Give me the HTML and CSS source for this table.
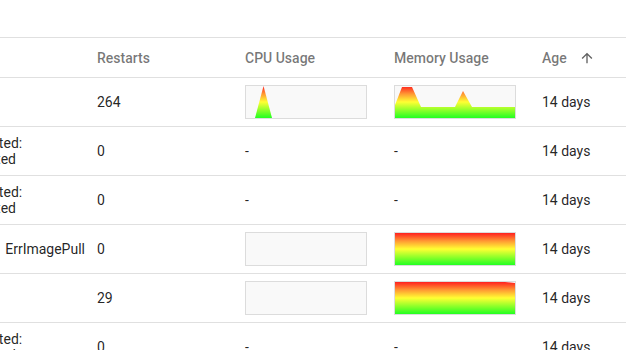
FILE: index.html
```html
<!DOCTYPE html>
<html>
<head>
<meta charset="utf-8">
<link rel="stylesheet" href="styles.css">
</head>
<body>
<svg class="defs" width="0" height="0">
  <defs>
    <linearGradient id="heat" x1="0" y1="0" x2="0" y2="32" gradientUnits="userSpaceOnUse">
      <stop offset="0" stop-color="#ff2020"/>
      <stop offset="0.25" stop-color="#ff9933"/>
      <stop offset="0.5" stop-color="#ffff33"/>
      <stop offset="1" stop-color="#22ff22"/>
    </linearGradient>
  </defs>
</svg>
<div class="viewport">
  <div class="table">
    <div class="row head">
      <div class="cell"></div>
      <div class="cell">Restarts</div>
      <div class="cell">CPU Usage</div>
      <div class="cell">Memory Usage</div>
      <div class="cell age">Age
        <svg class="sort" viewBox="0 0 24 24" width="16" height="16"><path d="M4 12l1.41 1.41L11 7.83V20h2V7.83l5.58 5.59L20 12l-8-8-8 8z"/></svg>
      </div>
    </div>
    <div class="row">
      <div class="cell"></div>
      <div class="cell">264</div>
      <div class="cell"><svg class="chart" viewBox="0 0 120 32" preserveAspectRatio="none"><polygon fill="url(#heat)" points="9,32 17.5,0 26,32"/></svg></div>
      <div class="cell"><svg class="chart" viewBox="0 0 120 32" preserveAspectRatio="none"><polygon fill="url(#heat)" points="0,32 0,19 7,1 17,1 26,21 60,21 68,5 77,21 120,21 120,32"/></svg></div>
      <div class="cell">14 days</div>
    </div>
    <div class="row">
      <div class="cell status">Terminated:<br>Completed</div>
      <div class="cell">0</div>
      <div class="cell">-</div>
      <div class="cell">-</div>
      <div class="cell">14 days</div>
    </div>
    <div class="row">
      <div class="cell status">Terminated:<br>Completed</div>
      <div class="cell">0</div>
      <div class="cell">-</div>
      <div class="cell">-</div>
      <div class="cell">14 days</div>
    </div>
    <div class="row">
      <div class="cell status">Waiting:<span class="reason">ErrImagePull</span></div>
      <div class="cell">0</div>
      <div class="cell"><svg class="chart" viewBox="0 0 120 32" preserveAspectRatio="none"></svg></div>
      <div class="cell"><svg class="chart" viewBox="0 0 120 32" preserveAspectRatio="none"><rect fill="url(#heat)" x="0" y="0" width="120" height="32"/></svg></div>
      <div class="cell">14 days</div>
    </div>
    <div class="row">
      <div class="cell"></div>
      <div class="cell">29</div>
      <div class="cell"><svg class="chart" viewBox="0 0 120 32" preserveAspectRatio="none"></svg></div>
      <div class="cell"><svg class="chart" viewBox="0 0 120 32" preserveAspectRatio="none"><polygon fill="url(#heat)" points="0,0 110,0 120,1 120,32 0,32"/></svg></div>
      <div class="cell">14 days</div>
    </div>
    <div class="row">
      <div class="cell status">Terminated:<br>Completed</div>
      <div class="cell">0</div>
      <div class="cell">-</div>
      <div class="cell">-</div>
      <div class="cell">14 days</div>
    </div>
  </div>
</div>
</body>
</html>
```

FILE: styles.css
```css
html, body {
  margin: 0;
  padding: 0;
  background: #fff;
}
body {
  font-family: Roboto, "Liberation Sans", sans-serif;
  font-size: 14px;
  color: rgba(0, 0, 0, 0.87);
}
.defs {
  position: absolute;
  width: 0;
  height: 0;
}
.viewport {
  width: 626px;
  height: 350px;
  overflow: hidden;
  padding-top: 37px;
  box-sizing: border-box;
}
.table {
  margin-left: -52px;
  width: 678px;
  border-top: 1px solid #e0e0e0;
}
.row {
  display: grid;
  grid-template-columns: 149px 148px 149px 148px 1fr;
  height: 48px;
  border-bottom: 1px solid #e0e0e0;
  align-items: center;
}
.row.head {
  height: 39px;
  color: rgba(0, 0, 0, 0.54);
  font-weight: 500;
}
.cell {
  line-height: 16px;
  white-space: nowrap;
}
.reason {
  margin-left: 7px;
}
.age {
  display: flex;
  align-items: center;
  gap: 12px;
}
.sort {
  fill: #616161;
}
.chart {
  display: block;
  width: 120px;
  height: 32px;
  background: #f9f9f9;
  border: 1px solid #dcdcdc;
}
```
